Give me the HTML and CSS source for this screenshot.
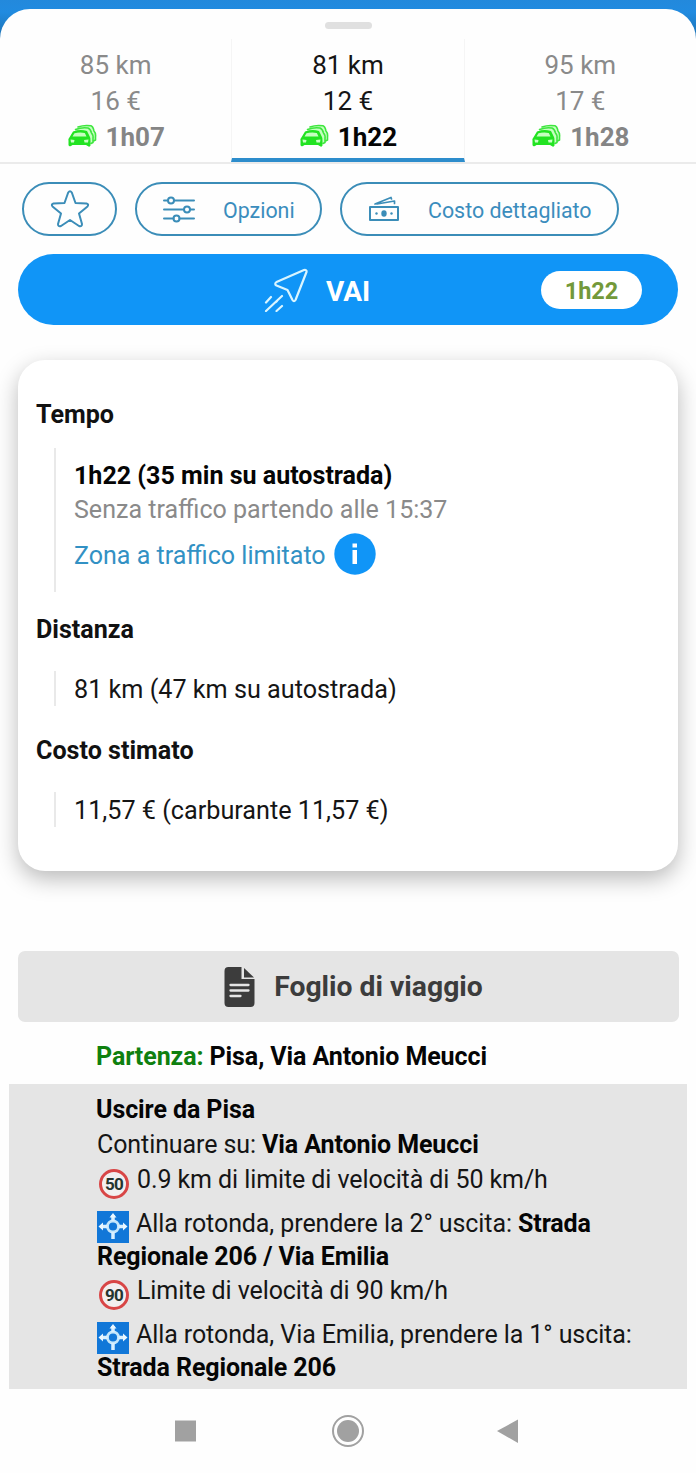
FILE: index.html
```
<!DOCTYPE html>
<html lang="it">
<head>
<meta charset="utf-8">
<title>Itinerario</title>
<link rel="stylesheet" href="styles.css">
</head>
<body>
<svg class="defs" aria-hidden="true">
  <symbol id="cars" viewBox="0 0 30 24">
    <g fill="#c5ffc0" stroke="#3ee63e" stroke-width="1.600" stroke-linejoin="round" stroke-linecap="round">
      <path d="M11 3Q17 .8 24 1.800Q26 2.500 27 7Q29 9 28.500 13V16L26.500 17"/>
      <path d="M8.500 5.500Q15 3 21 4Q23.500 5 24.500 9Q26.500 11 26 15V18.500L24 19.500"/>
    </g>
    <path fill="#c5ffc0" d="M7 8.500H19L21 13H4Z"/>
    <path fill="#22e322" fill-rule="evenodd" d="M6 7.500Q13 5 20 7L22.500 12Q24 14 23.500 17.500V21.500Q23 23 21.500 22.500L19 21H5.500L4 22Q2 23 1.500 21V17Q1 14.500 3 12.500ZM7.500 9.200L5.500 12.500H19.500L17.800 9Q13 7.700 7.500 9.200Z"/>
    <path fill="#c9ffc4" d="M3.500 15.500L7.500 16L7 18.500H4ZM21.500 15.500L17 16L17.500 18.500H21Z"/>
  </symbol>
  <symbol id="roundabout" viewBox="0 0 32 32">
    <rect width="32" height="32" fill="#1177d8"/>
    <circle cx="16" cy="15.500" r="5.500" fill="none" stroke="#c4e6fb" stroke-width="2.800"/>
    <path d="M16 10V4M16 21V28M10.500 15.500H4M21.500 15.500H28" stroke="#d9f0ff" stroke-width="3.500"/>
    <path fill="#eaf7ff" d="M12.500 6.500L16 2L19.500 6.500ZM6 11.500V19.500L1.500 15.500ZM26 11.500V19.500L30.500 15.500Z"/>
  </symbol>
</svg>
<main class="sheet">
  <div class="handle"></div>
  <nav class="tabs">
    <div class="tab"><span>85 km</span><span>16 €</span><span class="time"><svg class="cars"><use href="#cars"/></svg><b>1h07</b></span></div>
    <div class="tab active"><span>81 km</span><span>12 €</span><span class="time"><svg class="cars"><use href="#cars"/></svg><b>1h22</b></span></div>
    <div class="tab"><span>95 km</span><span>17 €</span><span class="time"><svg class="cars"><use href="#cars"/></svg><b>1h28</b></span></div>
  </nav>
  <div class="actions">
    <div class="pill star">
      <svg width="40" height="38" viewBox="0 0 40 38"><path d="M18.200 2.500Q20 0 21.800 2.500L25.500 13L36.500 13.500Q39.200 14.300 37.500 16.500L29 23.500L32 34Q32 37 29 36L20 30L11 36Q8 37 8 34L11 23.500L2.500 16.500Q.8 14.300 3.500 13.500L14.500 13Z"/></svg>
    </div>
    <div class="pill options">
      <svg width="32" height="28" viewBox="0 0 32 28"><path d="M1 5.500H5M11 5.500H31M1 14.500H21M27 14.500H31M1 23.500H10.500M16.500 23.500H31"/><circle cx="8" cy="5.500" r="3"/><circle cx="24" cy="14.500" r="3"/><circle cx="13.500" cy="23.500" r="3"/></svg>
      <span>Opzioni</span>
    </div>
    <div class="pill cost">
      <svg width="30" height="26" viewBox="0 0 30 26"><rect x="1" y="11" width="28" height="13"/><path stroke-width="1.700" d="M6 8L22 1.500L22.500 3M8 8L25.500 5V7.500"/><ellipse class="solid" cx="15" cy="17.500" rx="2.700" ry="3.200"/><circle class="solid" cx="7.500" cy="17.500" r="1.200"/><circle class="solid" cx="22.500" cy="17.500" r="1.200"/></svg>
      <span>Costo dettagliato</span>
    </div>
  </div>
  <div class="go">
    <svg width="44" height="44" viewBox="0 0 44 44"><path d="M40 2Q43 1.500 42.500 4L31.500 32Q30 34.500 28.500 32L23.500 22L12.500 17.500Q10 16 12.500 14ZM2 34.500L7 29M2 43L18 28M12.500 43L18 38M12 34L13 33"/></svg>
    <span>VAI</span>
    <b class="eta">1h22</b>
  </div>
  <section class="card">
    <h2>Tempo</h2>
    <div class="detail duration">
      <b>1h22 (35 min su autostrada)</b>
      <span class="muted">Senza traffico partendo alle 15:37</span>
      <span class="zone"><span>Zona a traffico limitato</span><svg width="42" height="42" viewBox="0 0 42 42"><circle cx="21" cy="21" r="20.700" fill="#1095f7"/><path fill="#fff" d="M18.500 10.500H23V14.500H18.500ZM18.500 17H23V31H18.500Z"/></svg></span>
    </div>
    <h2>Distanza</h2>
    <div class="detail"><span>81 km (47 km su autostrada)</span></div>
    <h2>Costo stimato</h2>
    <div class="detail"><span>11,57 € (carburante 11,57 €)</span></div>
  </section>
  <div class="roadbook">
    <svg width="31" height="40" viewBox="0 0 30 40"><path fill="#3c3c3c" d="M4 0H17V12H30V36Q30 40 26 40H4Q0 40 0 36V4Q0 0 4 0Z"/><path fill="#3c3c3c" d="M19.500 1L29.500 10.500H19.500Z"/><path stroke="#e5e5e5" stroke-width="2.300" stroke-linecap="round" d="M6 18H24M6 23.500H24M6 29H16"/></svg>
    <span>Foglio di viaggio</span>
  </div>
  <div class="departure"><span>Partenza:</span> Pisa, Via Antonio Meucci</div>
  <section class="steps">
    <div class="step leave"><b>Uscire da Pisa</b></div>
    <div class="step">Continuare su: <b>Via Antonio Meucci</b></div>
    <div class="step limit"><i class="sign">50</i><span>0.9 km di limite di velocità di 50 km/h</span></div>
    <div class="step turn"><svg><use href="#roundabout"/></svg><span>Alla rotonda, prendere la 2° uscita: <b>Strada</b></span></div>
    <div class="step street"><b>Regionale 206 / Via Emilia</b></div>
    <div class="step limit"><i class="sign">90</i><span>Limite di velocità di 90 km/h</span></div>
    <div class="step turn"><svg><use href="#roundabout"/></svg><span>Alla rotonda, Via Emilia, prendere la 1° uscita:</span></div>
    <div class="step street"><b>Strada Regionale 206</b></div>
  </section>
  <footer class="system">
    <svg width="696" height="84" viewBox="0 0 696 84" fill="#a1a1a1"><rect x="175" y="31.500" width="21" height="21"/><circle cx="348" cy="42" r="11"/><circle cx="348" cy="42" r="15" fill="none" stroke="#a1a1a1" stroke-width="2"/><path d="M497 42L518 30.500V54Z"/></svg>
  </footer>
</main>
</body>
</html>
```
FILE: styles.css
```
* { box-sizing: border-box; }
body {
  margin: 0;
  padding-top: 9px;
  background: linear-gradient(#2389dc 0, #218be0 12px, #1c70b0 40px);
  font: 25px/36px Roboto, sans-serif;
  color: #151515;
}
svg { display: block; flex: none; }
.defs { position: absolute; width: 0; height: 0; }
b { font-weight: 700; color: #050505; }
.sheet {
  height: 1464px;
  overflow: hidden;
  background: #fefefe;
  border-radius: 30px 30px 0 0;
  padding-top: 13px;
}
.handle { width: 47px; height: 7px; margin: 0 auto; border-radius: 4px; background: #e0e0e0; }
.tabs { display: flex; height: 125px; margin-top: 10px; border-bottom: 2px solid #ebebeb; }
.tab {
  flex: 1;
  height: 123px;
  padding-top: 8px;
  display: flex;
  flex-direction: column;
  align-items: center;
  color: #8a8a8a;
  font-size: 26px;
}
.tab b { color: #858585; }
.tab.active { color: #151515; border: solid #f5f5f5; border-width: 0 1px; border-bottom: 4px solid #2d8dcc; }
.tab.active b { color: #050505; }
.time { display: flex; align-items: center; gap: 9px; }
.cars { width: 30px; height: 24px; margin-bottom: 2px; }
.actions { display: flex; gap: 18px; margin: 18px 0 0 22px; color: #3b8dbd; font-size: 21.4px; }
.actions span { margin-top: 3px; }
.pill { display: flex; align-items: center; height: 54px; border: 2px solid #3b8db8; border-radius: 27px; }
.pill svg { fill: none; stroke: #3b8db8; stroke-width: 2; stroke-linejoin: round; stroke-linecap: round; }
.pill .solid { fill: #3b8db8; stroke: none; }
.star { width: 95px; justify-content: center; }
.options { width: 187px; padding-left: 26px; gap: 28px; }
.cost { width: 279px; padding-left: 27px; gap: 29px; }
.cost svg { margin-bottom: 1px; }
.go {
  display: flex;
  align-items: center;
  height: 71px;
  margin: 18px 18px 0;
  padding: 0 36px 0 246px;
  border-radius: 36px;
  background: #1095f7;
  color: #fff;
  font-size: 28px;
  font-weight: 700;
}
.go svg { fill: none; stroke: #d9f5ff; stroke-width: 2.200; stroke-linejoin: round; stroke-linecap: round; }
.go span { margin: 4px 0 0 18px; }
.eta { width: 101px; height: 38px; margin-left: auto; border-radius: 19px; background: #fff; color: #73993a; font-size: 23.5px; line-height: 41px; text-align: center; }
.card {
  height: 511px;
  margin: 35px 18px 0;
  padding: 37px 18px 0;
  border-radius: 27px;
  background: #fff;
  box-shadow: 0 8px 22px rgba(0, 0, 0, .27);
}
h2 { margin: 0; font: 700 25.1px/36px Roboto, sans-serif; color: #111; }
.detail { display: flex; flex-direction: column; align-items: flex-start; height: 35px; margin: 23px 0 27px 18px; padding-left: 18px; border-left: 2px solid #e9e9e9; font-size: 25.2px; line-height: 38px; white-space: nowrap; }
.duration { height: 144px; margin: 15px 0 20px 18px; padding-top: 11px; font-size: 25.05px; line-height: 34px; }
.muted { color: #8a8a8a; }
.zone { display: flex; align-items: center; gap: 8px; margin-top: 6px; color: #3291c4; }
.zone span { margin-top: 3px; }
.roadbook { display: flex; align-items: center; justify-content: center; gap: 19px; height: 71px; margin: 80px 17px 0 18px; padding-left: 10px; border-radius: 7px; background: #e5e5e5; color: #3c3c3c; font-size: 28.3px; font-weight: 700; }
.departure { height: 62px; padding: 17px 0 0 96px; letter-spacing: -.09px; font-weight: 700; color: #050505; }
.departure span { color: #0f800f; }
.steps { height: 305px; margin: 0 9px; padding: 8px 0 0 88px; background: #e5e5e5; letter-spacing: -.09px; white-space: nowrap; }
.step { height: 35px; }
.leave { margin-left: -1px; }
.limit { display: flex; gap: 8px; height: 39px; padding-left: 2px; }
.sign { width: 30px; height: 30px; margin-top: 7px; border: 3.5px solid #d84646; border-radius: 50%; background: #f2efef; color: #25352f; font: 700 17px/24px Roboto, sans-serif; letter-spacing: -.7px; text-align: center; }
.turn { display: flex; gap: 7px; height: 35px; margin-top: 5px; }
.turn svg { width: 32px; height: 32px; margin-top: 5px; }
.street { height: 32px; line-height: 31px; }
.system { height: 84px; }
```
